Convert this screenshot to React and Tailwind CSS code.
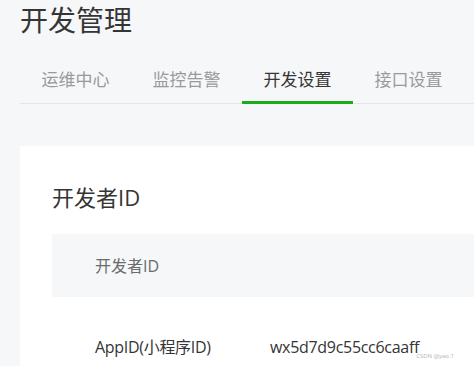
const tabs = ['运维中心', '监控告警', '开发设置', '接口设置'];

const font = { fontFamily: '"Open Sans", "Noto Sans CJK SC", sans-serif' };

export default function App() {
  const active = 2;

  return (
    <div
      className="relative w-[474px] h-[366px] overflow-hidden bg-[#f6f7f9] text-[#353535]"
      style={font}
    >
      <div className="pl-5 w-[620px]">
        <h1 className="text-[28px] leading-[40px] font-normal">开发管理</h1>

        <div className="mt-[17px] flex border-b border-[#e4e6ea]">
          {tabs.map((t, i) => (
            <div
              key={t}
              className={`relative w-[111px] h-[46px] flex items-center justify-center text-[17px] ${
                i === active ? 'text-[#353535]' : 'text-[#9a9a9a]'
              }`}
            >
              {t}
              {i === active && (
                <span className="absolute left-0 right-0 -bottom-px h-[3px] bg-[#1aad19]" />
              )}
            </div>
          ))}
        </div>

        <div className="mt-[42px] bg-white pl-8 pt-[36px] h-[240px]">
          <h2 className="text-[22px] leading-[30px] font-normal">开发者ID</h2>

          <div className="mt-[22px] h-[63px] bg-[#f6f7f9] flex items-center pl-[43px] text-[16px] text-[#6b6b6b]">
            开发者ID
          </div>

          <div className="flex items-center h-[100px] pl-[43px] text-[16px] tracking-[-0.3px] text-[#353535]">
            <span className="w-[175px]">AppID(小程序ID)</span>
            <span>wx5d7d9c55cc6caaff</span>
          </div>
        </div>
      </div>

      <span className="absolute right-[20px] bottom-[7px] text-[6px] leading-none text-[#b5b5b5]">
        CSDN @yao.1
      </span>
    </div>
  );
}
